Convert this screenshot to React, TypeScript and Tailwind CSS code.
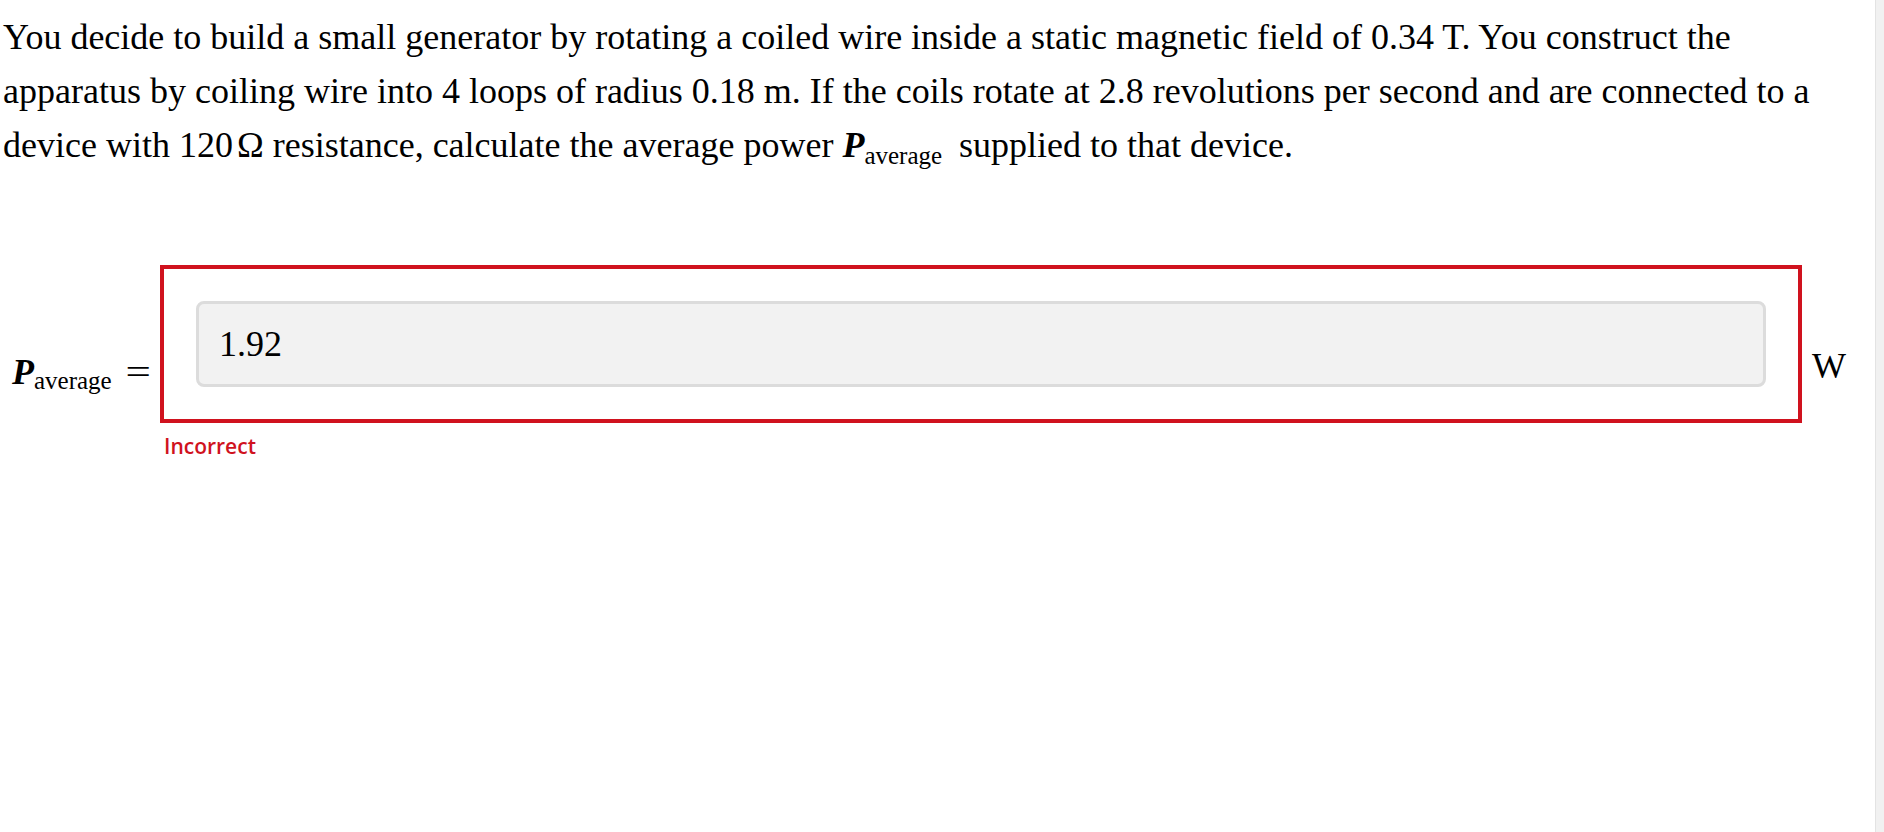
import React from "react";

const serif = { fontFamily: '"Liberation Serif", "Times New Roman", serif' };

function PAvg({ subShift }: { subShift: "text" | "row" }) {
  return (
    <span className="whitespace-nowrap">
      <span className="font-bold italic">P</span>
      <span
        className={
          subShift === "text"
            ? "relative top-[7px] text-[25px]"
            : "relative top-[5px] text-[25px]"
        }
      >
        average
      </span>
    </span>
  );
}

export default function App() {
  return (
    <div className="flex h-[832px] w-full bg-white text-black" style={serif}>
      <div className="flex-1 min-w-0">
        <p className="pl-[3px] pt-[10px] text-[36px] leading-[54px]">
          You decide to build a small generator by rotating a coiled wire inside a static
          magnetic field of 0.34 T. You construct the apparatus by coiling wire into 4 loops
          of radius 0.18 m. If the coils rotate at 2.8 revolutions per second and are
          connected to a device with 120<span className="ml-[4px]">Ω</span> resistance,
          calculate the average power <PAvg subShift="text" />
          <span className="ml-[8px]"> </span>supplied to that device.
        </p>

        <div className="mt-[89px] flex items-start pr-[29px]">
          <div className="mt-[89px] flex w-[160px] shrink-0 items-baseline pl-[12px] text-[36px] leading-[36px]">
            <PAvg subShift="row" />
            <span className="ml-[16px] inline-block scale-x-125">=</span>
          </div>

          <div className="flex flex-1 flex-col">
            <div className="border-4 border-[#d0121e] p-8">
              <div className="flex h-[86px] items-center rounded-[8px] border-[3px] border-[#dcdcdc] bg-[#f2f2f2] pl-[20px] text-[36px] leading-[36px]">
                1.92
              </div>
            </div>
            <div
              className="ml-[4px] mt-[9px] text-[21px] font-semibold leading-[28px] text-[#d0121e]"
              style={{ fontFamily: '"Open Sans", "Noto Sans", sans-serif' }}
            >
              Incorrect
            </div>
          </div>

          <div className="ml-[10px] mt-[83px] text-[36px] leading-[36px]">W</div>
        </div>
      </div>
      <div className="h-full w-[9px] shrink-0 border-l border-[#e3e3e3] bg-[#f1f1f1]" />
    </div>
  );
}
